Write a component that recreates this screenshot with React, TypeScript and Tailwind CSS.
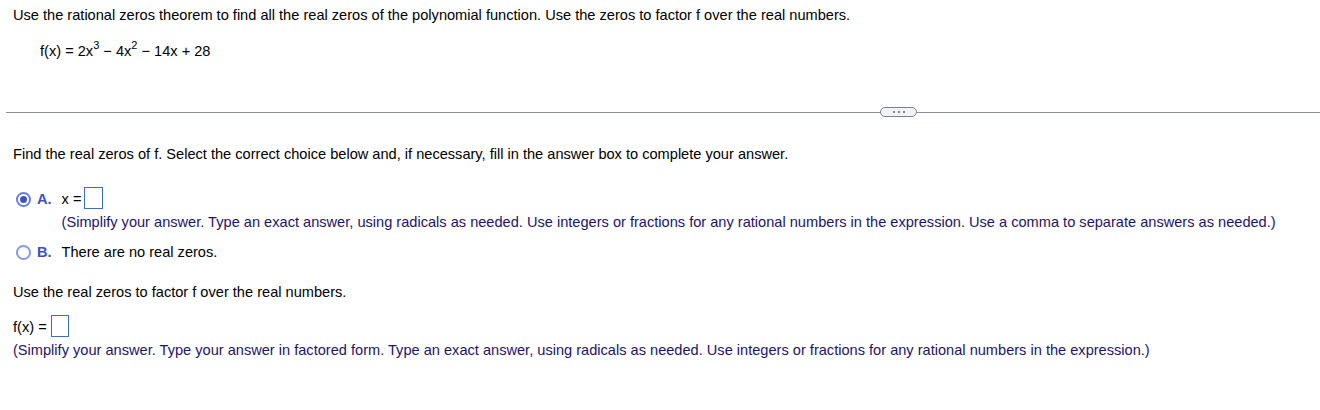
export default function App() {
  return (
    <div className="w-[1320px] h-[410px] bg-white text-[14.6px] leading-[17px] text-black overflow-hidden" style={{ fontFamily: '"Liberation Sans", Arial, sans-serif' }}>
      <div className="pl-[13px] pt-[7px]">
        <p>Use the rational zeros theorem to find all the real zeros of the polynomial function. Use the zeros to factor f over the real numbers.</p>
        <p className="pl-[27px] mt-[19px]">
          f(x) = 2x<sup className="text-[11px] -top-[0.6em]">3</sup> − 4x<sup className="text-[11px] -top-[0.6em]">2</sup> − 14x + 28
        </p>
      </div>

      <div className="mt-[47px] ml-[6px] flex items-center">
        <div className="w-[874px] h-px bg-[#8a8f9e]" />
        <div className="w-[37px] h-[10px] rounded-full border border-[#7a8090] bg-[#f1f3f6] flex items-center justify-center gap-[3px]">
          <span className="w-[2px] h-[2px] bg-[#5a6070] rounded-full" />
          <span className="w-[2px] h-[2px] bg-[#5a6070] rounded-full" />
          <span className="w-[2px] h-[2px] bg-[#5a6070] rounded-full" />
        </div>
        <div className="flex-1 h-px bg-[#8a8f9e]" />
      </div>

      <p className="pl-[13px] mt-[29px]">Find the real zeros of f. Select the correct choice below and, if necessary, fill in the answer box to complete your answer.</p>

      <div className="pl-[16px] mt-[24px]">
        <div className="flex items-start">
          <div className="mt-[5px] w-[15px] h-[15px] rounded-full border-2 border-[#6a7fd8] flex items-center justify-center">
            <div className="w-[7px] h-[7px] rounded-full bg-[#3d52c4]" />
          </div>
          <span className="ml-[6px] mt-[4px] font-bold text-[#3c4fbf]">A.</span>
          <div className="ml-[10px]">
            <div className="flex items-end">
              <span className="mb-[1px]">x =</span>
              <div className="ml-[3px] w-[19px] h-[22px] border border-[#3c6fc4]" />
            </div>
            <p className="mt-[5px] text-[#1e1466]">(Simplify your answer. Type an exact answer, using radicals as needed. Use integers or fractions for any rational numbers in the expression. Use a comma to separate answers as needed.)</p>
          </div>
        </div>
        <div className="flex items-center mt-[13px]">
          <div className="w-[15px] h-[15px] rounded-full border-2 border-[#8a9be0]" />
          <span className="ml-[6px] font-bold text-[#3c4fbf]">B.</span>
          <span className="ml-[10px]">There are no real zeros.</span>
        </div>
      </div>

      <p className="pl-[13px] mt-[23px]">Use the real zeros to factor f over the real numbers.</p>

      <div className="pl-[13px] mt-[14px]">
        <div className="flex items-end">
          <span className="mb-[1px]">f(x) =</span>
          <div className="ml-[4px] w-[18px] h-[22px] border border-[#3c6fc4]" />
        </div>
        <p className="mt-[5px] text-[#1e1466]">(Simplify your answer. Type your answer in factored form. Type an exact answer, using radicals as needed. Use integers or fractions for any rational numbers in the expression.)</p>
      </div>
    </div>
  );
}
